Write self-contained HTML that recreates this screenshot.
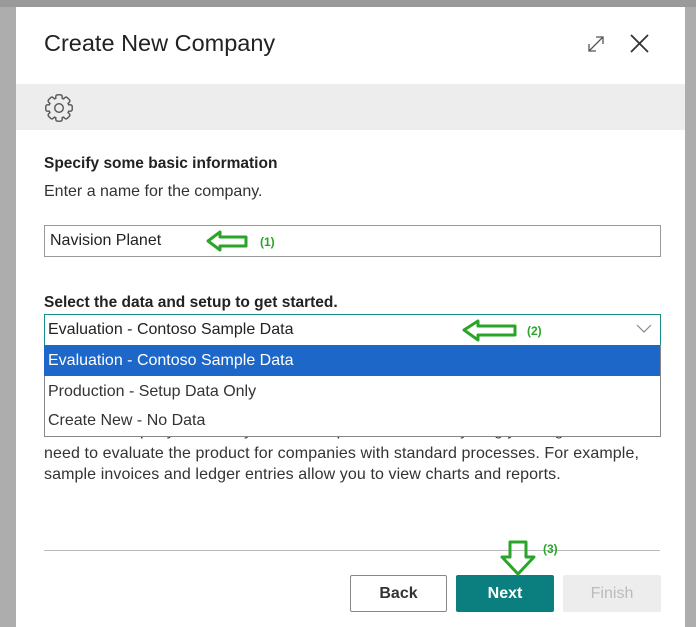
<!DOCTYPE html>
<html><head><meta charset="utf-8"><style>
body{margin:0;width:696px;height:621px;background:#adadad;position:relative;overflow:hidden;font-family:"Liberation Sans",sans-serif;color:#222}
.a{position:absolute;white-space:nowrap}
#dlg{position:absolute;left:16px;top:7px;width:669px;height:620px;background:#fff}
.t{font-size:16px}
</style></head><body>
<div class="a" style="left:0;top:0;width:696px;height:7px;background:#9a9a9a"></div>
<div id="dlg"></div>
<div class="a" style="left:44px;top:30px;font-size:23.5px;color:#222">Create New Company</div>
<svg class="a" style="left:586px;top:32px" width="70" height="24" viewBox="0 0 70 24">
<path d="M3 19 L17 5 M10 5 H17 V12 M3 12 V19 H10" fill="none" stroke="#555" stroke-width="1.3"/>
<path d="M45 3 L62 20 M62 3 L45 20" stroke="#333" stroke-width="1.8"/>
</svg>
<div class="a" style="left:16px;top:84px;width:669px;height:46px;background:#ededed"></div>
<svg class="a" style="left:44px;top:93px" width="32" height="30" viewBox="0 0 32 30">
<defs><g id="g"><circle cx="15" cy="15" r="9.5"/>
<rect x="12.5" y="2.5" width="5" height="25" rx="1"/>
<rect x="12.5" y="2.5" width="5" height="25" rx="1" transform="rotate(45 15 15)"/>
<rect x="12.5" y="2.5" width="5" height="25" rx="1" transform="rotate(90 15 15)"/>
<rect x="12.5" y="2.5" width="5" height="25" rx="1" transform="rotate(135 15 15)"/></g></defs>
<use href="#g" fill="#555" stroke="#555" stroke-width="2.8" stroke-linejoin="round"/>
<use href="#g" fill="#ededed"/>
<circle cx="15" cy="15" r="4.3" fill="none" stroke="#555" stroke-width="1.4"/>
</svg>
<div class="a" style="left:44px;top:155px;font-weight:bold;font-size:15.5px">Specify some basic information</div>
<div class="a t" style="left:44px;top:183px;color:#333">Enter a name for the company.</div>
<div class="a" style="left:44px;top:225px;width:615px;height:30px;border:1px solid #999"></div>
<div class="a t" style="left:50px;top:232px">Navision Planet</div>
<svg class="a" style="left:0;top:0" width="696" height="621">
<polygon points="208,241 220,232 220,237 246,237 246,246 220,246 220,250" fill="none" stroke="#2aa52a" stroke-width="3" stroke-linejoin="round"/>
<text x="260" y="246" font-family="Liberation Sans" font-size="12" font-weight="bold" fill="#2aa52a">(1)</text>
<polygon points="464,330 478,321 478,326 515,326 515,335 478,335 478,340" fill="none" stroke="#2aa52a" stroke-width="3" stroke-linejoin="round"/>
<text x="527" y="335" font-family="Liberation Sans" font-size="12" font-weight="bold" fill="#2aa52a">(2)</text>
</svg>
<div class="a" style="left:44px;top:294px;font-weight:bold;font-size:15.5px">Select the data and setup to get started.</div>
<div class="a" style="left:44px;top:314px;width:615px;height:30px;border:1px solid #1b8a8a"></div>
<div class="a t" style="left:48px;top:321px">Evaluation - Contoso Sample Data</div>
<svg class="a" style="left:636px;top:324px" width="16" height="10"><path d="M1 1 L8 8 L15 1" fill="none" stroke="#888" stroke-width="1.2"/></svg>
<div class="a t" style="left:44px;top:422px;color:#333">Create a company with ready-to-use sample data that everything you might</div>
<div class="a" style="left:44px;top:345px;width:615px;height:91px;border:1px solid #888;border-top:none;background:#fff"></div>
<div class="a" style="left:44px;top:345px;width:616px;height:31px;background:#1c67c8"></div>
<div class="a t" style="left:48px;top:352px;color:#fff">Evaluation - Contoso Sample Data</div>
<div class="a t" style="left:48px;top:383px;color:#333">Production - Setup Data Only</div>
<div class="a t" style="left:48px;top:412px;color:#333">Create New - No Data</div>
<div class="a t" style="left:44px;top:445px;color:#333;letter-spacing:0.1px">need to evaluate the product for companies with standard processes. For example,</div>
<div class="a t" style="left:44px;top:466px;color:#333;letter-spacing:0.1px">sample invoices and ledger entries allow you to view charts and reports.</div>
<div class="a" style="left:44px;top:550px;width:616px;height:1px;background:#bbb"></div>
<div class="a" style="left:350px;top:575px;width:95px;height:35px;border:1px solid #888;border-radius:2px;text-align:center;line-height:35px;font-size:16px;font-weight:bold;color:#333">Back</div>
<div class="a" style="left:456px;top:575px;width:98px;height:37px;background:#0b7f80;border-radius:2px;text-align:center;line-height:37px;font-size:16px;font-weight:bold;color:#fff">Next</div>
<div class="a" style="left:563px;top:575px;width:98px;height:37px;background:#ededed;border-radius:2px;text-align:center;line-height:37px;font-size:16px;color:#bbb">Finish</div>
<svg class="a" style="left:0;top:0" width="696" height="621">
<polygon points="510,542 526,542 526,557 534,557 518,574 502,557 510,557" fill="none" stroke="#2aa52a" stroke-width="3" stroke-linejoin="round"/>
<text x="543" y="553" font-family="Liberation Sans" font-size="12" font-weight="bold" fill="#2aa52a">(3)</text>
</svg>
</body></html>
